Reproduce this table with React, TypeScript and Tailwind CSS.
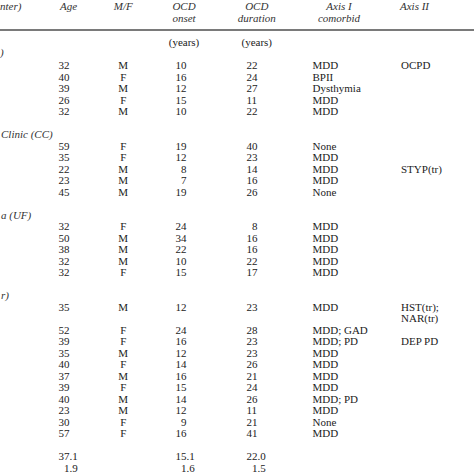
import React from 'react'

type Row = {
  label?: string
  age?: string
  sex?: string
  onset?: string
  dur?: string
  ax1?: string
  ax2?: string
}

const groups: Row[][] = [
  [
    { age: '32', sex: 'M', onset: '10', dur: '22', ax1: 'MDD', ax2: 'OCPD' },
    { age: '40', sex: 'F', onset: '16', dur: '24', ax1: 'BPII' },
    { age: '39', sex: 'M', onset: '12', dur: '27', ax1: 'Dysthymia' },
    { age: '26', sex: 'F', onset: '15', dur: '11', ax1: 'MDD' },
    { age: '32', sex: 'M', onset: '10', dur: '22', ax1: 'MDD' },
  ],
  [
    { label: 'Clinic (CC)' },
    { age: '59', sex: 'F', onset: '19', dur: '40', ax1: 'None' },
    { age: '35', sex: 'F', onset: '12', dur: '23', ax1: 'MDD' },
    { age: '22', sex: 'M', onset: '8', dur: '14', ax1: 'MDD', ax2: 'STYP(tr)' },
    { age: '23', sex: 'M', onset: '7', dur: '16', ax1: 'MDD' },
    { age: '45', sex: 'M', onset: '19', dur: '26', ax1: 'None' },
  ],
  [
    { label: 'a (UF)' },
    { age: '32', sex: 'F', onset: '24', dur: '8', ax1: 'MDD' },
    { age: '50', sex: 'M', onset: '34', dur: '16', ax1: 'MDD' },
    { age: '38', sex: 'M', onset: '22', dur: '16', ax1: 'MDD' },
    { age: '32', sex: 'M', onset: '10', dur: '22', ax1: 'MDD' },
    { age: '32', sex: 'F', onset: '15', dur: '17', ax1: 'MDD' },
  ],
  [
    { label: 'r)' },
    { age: '35', sex: 'M', onset: '12', dur: '23', ax1: 'MDD', ax2: 'HST(tr);' },
    { ax2: 'NAR(tr)' },
    { age: '52', sex: 'F', onset: '24', dur: '28', ax1: 'MDD; GAD' },
    { age: '39', sex: 'F', onset: '16', dur: '23', ax1: 'MDD; PD', ax2: 'DEP PD' },
    { age: '35', sex: 'M', onset: '12', dur: '23', ax1: 'MDD' },
    { age: '40', sex: 'F', onset: '14', dur: '26', ax1: 'MDD' },
    { age: '37', sex: 'M', onset: '16', dur: '21', ax1: 'MDD' },
    { age: '39', sex: 'F', onset: '15', dur: '24', ax1: 'MDD' },
    { age: '40', sex: 'M', onset: '14', dur: '26', ax1: 'MDD; PD' },
    { age: '23', sex: 'M', onset: '12', dur: '11', ax1: 'MDD' },
    { age: '30', sex: 'F', onset: '9', dur: '21', ax1: 'None' },
    { age: '57', sex: 'F', onset: '16', dur: '41', ax1: 'MDD' },
  ],
  [
    { age: '37.1', onset: '15.1', dur: '22.0' },
    { age: '1.9', onset: '1.6', dur: '1.5' },
  ],
]

// single integer digit gets pushed right by one figure so columns line up
function Num({ v }: { v?: string }) {
  if (!v) return null
  const short = v.split('.')[0].length === 1
  return <span className={short ? 'pl-[5.5px]' : ''}>{v}</span>
}

function DataRow({ r }: { r: Row }) {
  if (r.label) {
    return (
      <div className="h-[11.5px] flex italic text-[#333]">
        <div className="pl-[1px] whitespace-nowrap">{r.label}</div>
      </div>
    )
  }
  return (
    <div className="h-[11.5px] flex whitespace-nowrap">
      <div className="w-[58.5px] shrink-0" />
      <div className="w-[40px] shrink-0">
        <Num v={r.age} />
      </div>
      <div className="w-[49.5px] shrink-0 text-center">{r.sex}</div>
      <div className="w-[92px] shrink-0 pl-[27.5px]">
        <Num v={r.onset} />
      </div>
      <div className="w-[72.5px] shrink-0 pl-[6.5px]">
        <Num v={r.dur} />
      </div>
      <div className="w-[87.5px] shrink-0">{r.ax1}</div>
      <div className="pl-[1px]">{r.ax2}</div>
    </div>
  )
}

export default function App() {
  return (
    <div className="w-[474px] h-[474px] overflow-hidden bg-white text-[#222] font-['Liberation_Serif',serif] text-[11px] leading-[11.5px]">
      {/* column headings */}
      <div className="flex italic text-[#333] leading-[12px] whitespace-nowrap">
        <div className="w-[58.5px] shrink-0">nter)</div>
        <div className="w-[40px] shrink-0 pl-[1.5px]">Age</div>
        <div className="w-[49.5px] shrink-0 text-center">M/F</div>
        <div className="w-[72px] shrink-0 flex flex-col items-center">
          <span>OCD</span>
          <span>onset</span>
        </div>
        <div className="w-[73.5px] shrink-0 flex flex-col items-center">
          <span>OCD</span>
          <span>duration</span>
        </div>
        <div className="w-[91px] shrink-0 flex flex-col items-center">
          <span>Axis I</span>
          <span>comorbid</span>
        </div>
        <div className="pl-[15.5px]">Axis II</div>
      </div>

      <div className="mt-[5px] h-[2px] bg-[#7a7a7a]" />

      <div className="mt-[6px] h-[10px] leading-[10px] flex whitespace-nowrap">
        <div className="w-[148px] shrink-0" />
        <div className="w-[72px] shrink-0 text-center">(years)</div>
        <div className="w-[73.5px] shrink-0 text-center">(years)</div>
      </div>

      <div className="h-[11.5px] italic text-[#333]">)</div>

      <div className="mt-[1.75px] flex flex-col gap-[11.5px]">
        {groups.map((g, i) => (
          <div key={i}>
            {g.map((r, j) => (
              <DataRow key={j} r={r} />
            ))}
          </div>
        ))}
      </div>
    </div>
  )
}
